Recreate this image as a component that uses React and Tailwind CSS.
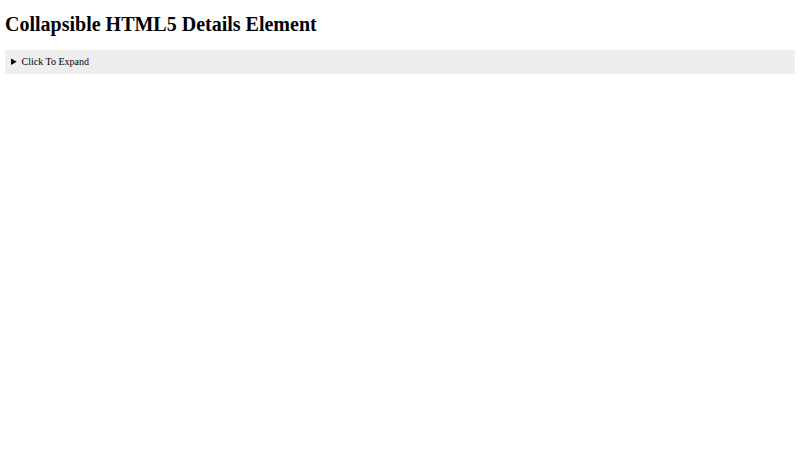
export default function App() {
  return (
    <main className="min-h-screen bg-white px-[5px] pt-3 font-['Liberation_Serif',serif] text-black">
      <h1 className="text-[20px] leading-6 font-bold">Collapsible HTML5 Details Element</h1>
      <details className="mt-3.5 bg-[#eeeeee] text-[10px] leading-3">
        <summary className="cursor-pointer p-1.5">Click To Expand</summary>
      </details>
    </main>
  );
}
